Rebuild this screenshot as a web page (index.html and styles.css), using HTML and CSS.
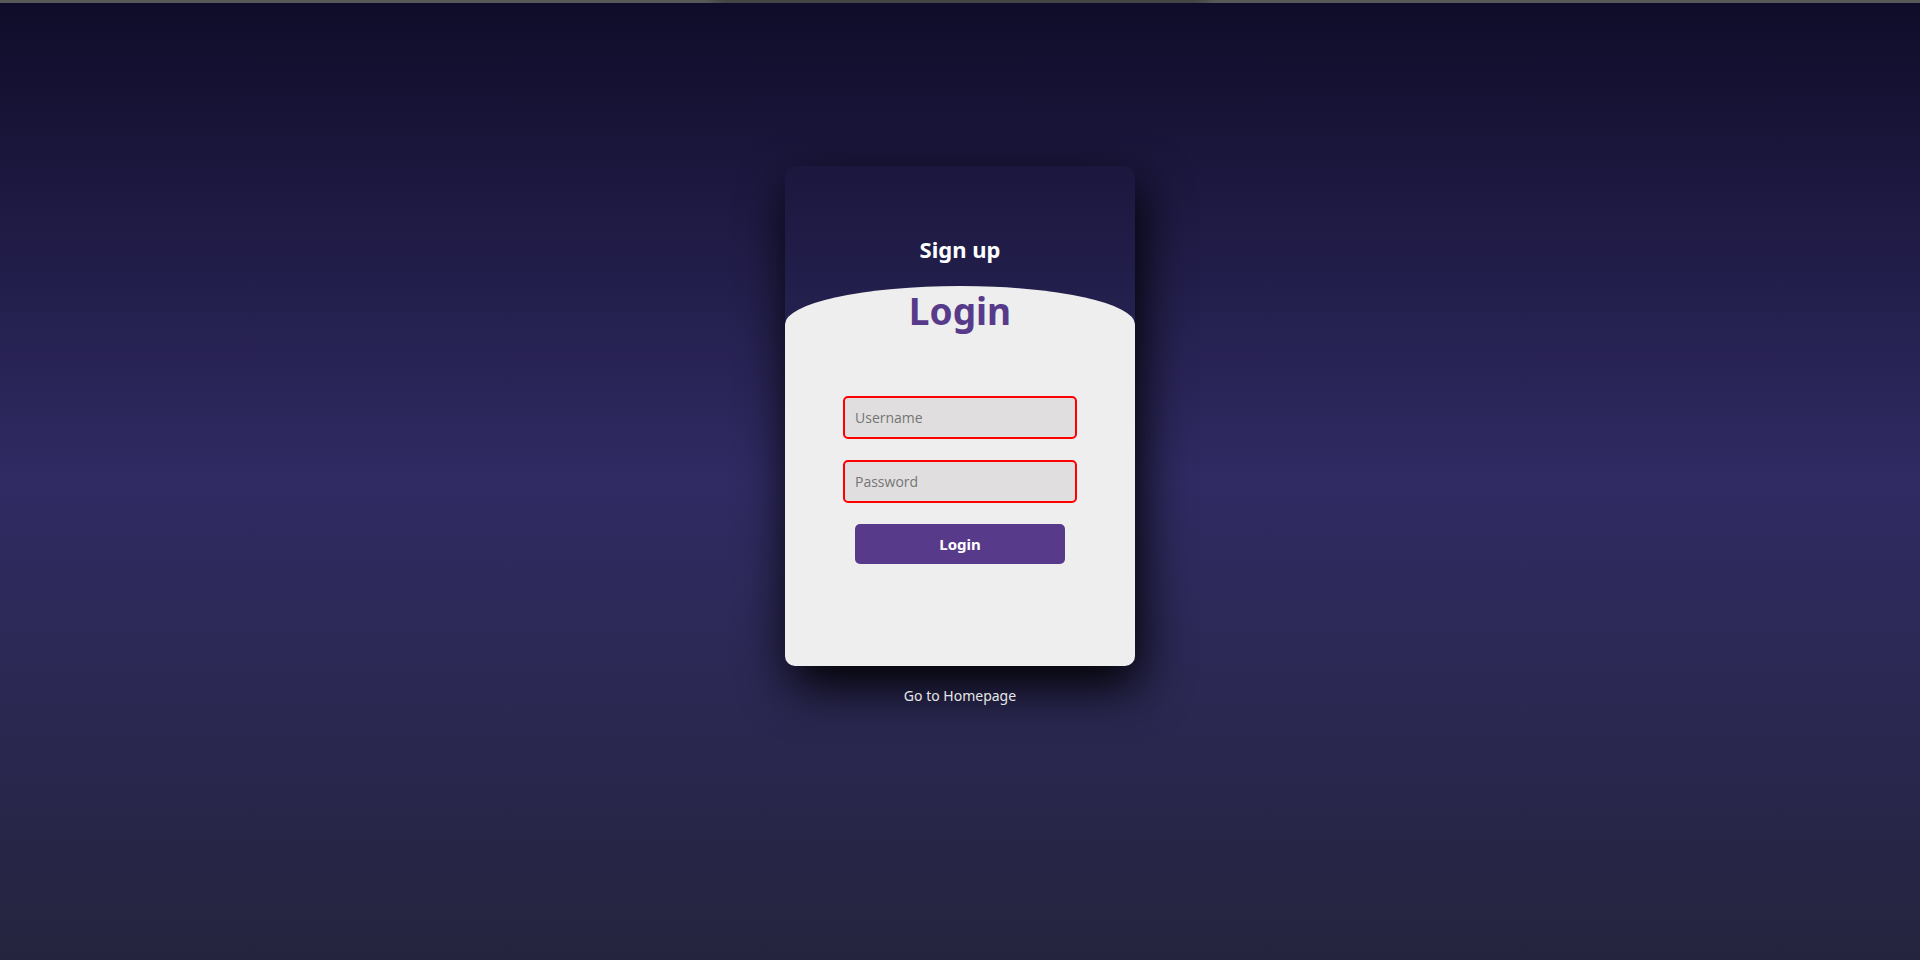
FILE: index.html
```
<!DOCTYPE html>
<html lang="en">
<head>
<meta charset="utf-8">
<title>Login</title>
<link rel="stylesheet" href="styles.css">
</head>
<body>
<div class="topbar"></div>
<main class="page">
  <div class="card">
    <div class="card-head">
      <span class="label-small">Sign up</span>
    </div>
    <form class="panel">
      <span class="label-big">Login</span>
      <input class="field" type="text" placeholder="Username">
      <input class="field" type="password" placeholder="Password">
      <button class="btn" type="button">Login</button>
    </form>
  </div>
  <a class="home-link" href="#">Go to Homepage</a>
</main>
</body>
</html>
```
FILE: styles.css
```
html, body {
  margin: 0;
  padding: 0;
}
body {
  min-height: 100vh;
  background: linear-gradient(to bottom, #0f0c29, #302b63, #24243e);
  font-family: "Noto Sans", "Open Sans", sans-serif;
  display: flex;
  flex-direction: column;
}
.topbar {
  height: 3px;
  background: linear-gradient(to right, #585858 0, #585858 705px, #444 725px, #444 1195px, #585858 1215px, #585858 100%);
}
.page {
  display: flex;
  flex-direction: column;
  align-items: center;
  padding-top: 163px;
}
.card {
  width: 350px;
  height: 500px;
  border-radius: 10px;
  overflow: hidden;
  box-shadow: 5px 20px 50px #000;
  display: flex;
  flex-direction: column;
}
.card-head {
  height: 120px;
  flex-shrink: 0;
  display: flex;
  justify-content: center;
  padding-top: 68px;
  box-sizing: border-box;
}
.label-small {
  color: #fff;
  font-weight: 700;
  font-size: 22px;
  line-height: 30px;
}
.panel {
  height: 460px;
  flex-shrink: 0;
  background: #eee;
  border-radius: 60% / 10%;
  display: flex;
  flex-direction: column;
  align-items: center;
  margin: 0;
  padding-top: 2px;
  box-sizing: border-box;
}
.label-big {
  color: #573b8a;
  font-weight: 700;
  font-size: 37px;
  line-height: 46px;
}
.field {
  width: 234px;
  height: 43px;
  box-sizing: border-box;
  background: #e0dede;
  border: 2px solid #ff0000;
  border-radius: 5px;
  padding: 0 10px;
  margin-top: 21px;
  font-family: "Open Sans", "Noto Sans", sans-serif;
  font-size: 14px;
  color: #333;
  outline: none;
}
.field:first-of-type {
  margin-top: 62px;
}
.field::placeholder {
  color: #757575;
}
.btn {
  width: 210px;
  height: 40px;
  margin-top: 21px;
  border: none;
  border-radius: 5px;
  background: #573b8a;
  color: #fff;
  font-family: "Noto Sans", sans-serif;
  font-weight: 700;
  font-size: 15px;
}
.home-link {
  margin-top: 20px;
  color: #e6e6e6;
  text-decoration: none;
  font-size: 14px;
  line-height: 20px;
}
```
